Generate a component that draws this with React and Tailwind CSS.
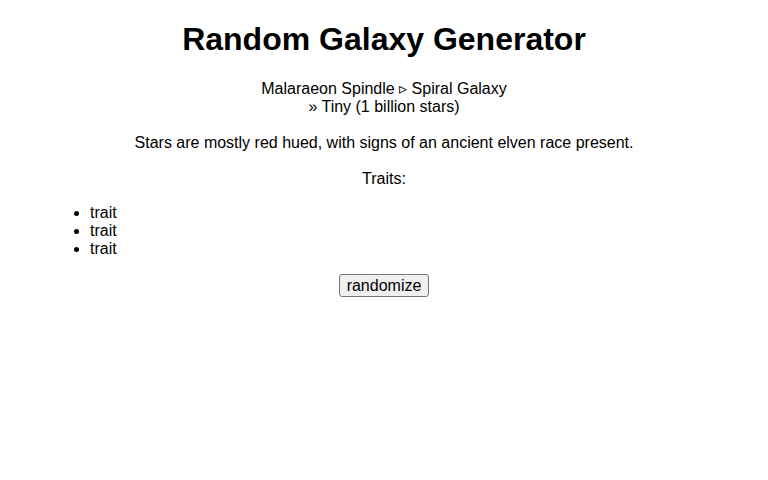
const traits = ["trait", "trait", "trait"];

const App = () => {
    return (
        <div className="min-h-screen bg-white text-black font-['Liberation_Sans',Arial,sans-serif] text-[16px] leading-[18px]">
            <h1 className="pt-[21px] text-center text-[32px] leading-[37px] font-bold">
                Random Galaxy Generator
            </h1>
            <p className="mt-[22px] text-center">
                Malaraeon Spindle ▹ Spiral Galaxy
                <br />
                » Tiny (1 billion stars)
            </p>
            <p className="mt-[18px] text-center">
                Stars are mostly red hued, with signs of an ancient elven race present.
            </p>
            <p className="mt-[18px] text-center">Traits:</p>
            <ul className="mt-[16px] list-disc pl-[90px]">
                {traits.map((t, i) => (
                    <li key={i}>{t}</li>
                ))}
            </ul>
            <div className="mt-[16px] flex justify-center">
                <button className="h-[23px] px-[7px] bg-[#efefef] border border-[#767676] rounded-[3px] text-[16px] leading-[18px]">
                    randomize
                </button>
            </div>
        </div>
    );
};
export default App;
